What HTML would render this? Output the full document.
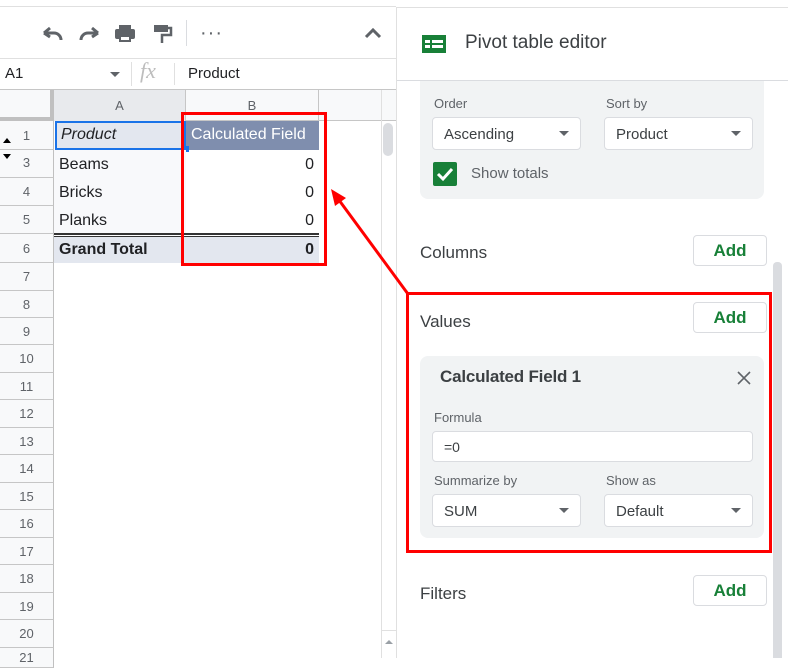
<!DOCTYPE html>
<html><head><style>
*{margin:0;padding:0;box-sizing:border-box}
body{width:788px;height:658px;overflow:hidden;background:#fff;font-family:"Liberation Sans",Arial,sans-serif;position:relative;color:#202124}
.a{position:absolute}
.rh{position:absolute;left:0;width:54px;text-align:center;font-size:13px;color:#5f6368;border-bottom:1px solid #c6c6c6;background:#f8f9fa;border-right:1px solid #c0c0c0}
.lbl{position:absolute;font-size:13px;color:#5f6368}
.dd{position:absolute;background:#fff;border:1px solid #dadce0;border-radius:4px;font-size:15px;color:#3c4043;padding-left:11px;line-height:34px}
.dd.ar:after{content:"";position:absolute;right:11px;top:13px;border:5px solid transparent;border-top:5px solid #5f6368}
.add{position:absolute;left:693px;width:74px;height:31px;border:1px solid #dadce0;border-radius:4px;color:#188038;font-size:17px;font-weight:bold;text-align:center;line-height:29px}
.sec{position:absolute;left:420px;font-size:17px;color:#3c4043}
</style></head><body>
<div class="a" style="left:0;top:6px;width:396px;height:1px;background:#e0e0e0"></div>
<svg class="a" style="left:40px;top:22px" width="150" height="22" viewBox="0 0 150 22">
<path d="M4 11 L10 6 M4 11 L10 15 M4 11 H14 a7 7 0 0 1 7 7" stroke="#5f6368" stroke-width="3" fill="none"/>
<path d="M58 11 L52 6 M58 11 L52 15 M58 11 H48 a7 7 0 0 0 -7 7" stroke="#5f6368" stroke-width="3" fill="none"/>
<rect x="75" y="7" width="20" height="10" rx="2" fill="#5f6368"/><rect x="79" y="3" width="12" height="4" fill="#5f6368"/><rect x="79" y="13" width="12" height="7" fill="#5f6368"/><rect x="81" y="15" width="8" height="3" fill="#fff"/>
<rect x="114" y="3" width="14" height="7" fill="#5f6368"/><path d="M128 6 h3 v7 h-9 v8" stroke="#5f6368" stroke-width="2.5" fill="none"/>
</svg>
<div class="a" style="left:186px;top:20px;width:1px;height:26px;background:#dadce0"></div>
<div class="a" style="left:200px;top:22px;font-size:20px;color:#5f6368;letter-spacing:1px">···</div>
<svg class="a" style="left:364px;top:27px" width="18" height="12"><path d="M2 10 L9 3 L16 10" stroke="#5f6368" stroke-width="3" fill="none"/></svg>
<div class="a" style="left:0;top:58px;width:396px;height:1px;background:#e0e0e0"></div>
<div class="a" style="left:5px;top:65px;font-size:15px">A1</div>
<div class="a" style="left:110px;top:72px;border:5px solid transparent;border-top:5px solid #5f6368"></div>
<div class="a" style="left:131px;top:62px;width:1px;height:24px;background:#e0e0e0"></div>
<div class="a" style="left:140px;top:58px;font-size:22px;font-style:italic;color:#bdbdbd;font-family:'Liberation Serif',serif">fx</div>
<div class="a" style="left:174px;top:63px;width:1px;height:22px;background:#e0e0e0"></div>
<div class="a" style="left:188px;top:65px;font-size:15px">Product</div>
<div class="a" style="left:0;top:89px;width:396px;height:32px;background:#f8f9fa;border-top:1px solid #c6c6c6;border-bottom:1px solid #c6c6c6"></div>
<div class="a" style="left:0;top:90px;width:54px;height:31px;border-right:4px solid #c0c0c0;border-bottom:4px solid #c0c0c0"></div>
<div class="a" style="left:54px;top:90px;width:132px;height:31px;background:#e8eaed;text-align:center;line-height:31px;font-size:13px;color:#5f6368;border-right:1px solid #c6c6c6">A</div>
<div class="a" style="left:186px;top:90px;width:133px;height:31px;text-align:center;line-height:31px;font-size:13px;color:#5f6368;border-right:1px solid #c6c6c6">B</div>
<div class="a" style="left:381px;top:90px;width:1px;height:568px;background:#e0e0e0"></div>
<div class="a" style="left:383px;top:123px;width:10px;height:33px;background:#dadce0;border-radius:5px"></div>
<div class="a" style="left:381px;top:630px;width:15px;height:1px;background:#e0e0e0"></div>
<div class="a" style="left:385px;top:636px;border:4px solid transparent;border-bottom:4px solid #9aa0a6"></div>
<div class="rh" style="top:121px;height:29px;line-height:29px">1</div>
<div class="a" style="left:3px;top:134px;border:4px solid transparent;border-bottom:5px solid #000"></div>
<div class="rh" style="top:150px;height:28px;line-height:26px">3</div>
<div class="a" style="left:3px;top:154px;border:4px solid transparent;border-top:5px solid #000"></div>
<div class="rh" style="top:178px;height:28px;line-height:28px">4</div>
<div class="rh" style="top:206px;height:28px;line-height:28px">5</div>
<div class="rh" style="top:234px;height:29px;line-height:29px">6</div>
<div class="rh" style="top:263px;height:28px;line-height:28px">7</div>
<div class="rh" style="top:291px;height:27px;line-height:27px">8</div>
<div class="rh" style="top:318px;height:27px;line-height:27px">9</div>
<div class="rh" style="top:345px;height:28px;line-height:28px">10</div>
<div class="rh" style="top:373px;height:27px;line-height:27px">11</div>
<div class="rh" style="top:400px;height:28px;line-height:28px">12</div>
<div class="rh" style="top:428px;height:27px;line-height:27px">13</div>
<div class="rh" style="top:455px;height:28px;line-height:28px">14</div>
<div class="rh" style="top:483px;height:27px;line-height:27px">15</div>
<div class="rh" style="top:510px;height:28px;line-height:28px">16</div>
<div class="rh" style="top:538px;height:27px;line-height:27px">17</div>
<div class="rh" style="top:565px;height:28px;line-height:28px">18</div>
<div class="rh" style="top:593px;height:27px;line-height:27px">19</div>
<div class="rh" style="top:620px;height:28px;line-height:28px">20</div>
<div class="rh" style="top:648px;height:20px;line-height:20px">21</div>
<div class="a" style="left:54px;top:121px;width:265px;height:142px;background:#fff"></div>
<div class="a" style="left:55px;top:121px;width:131px;height:29px;background:#e3e7ef;border:2px solid #1a73e8;font-style:italic;font-size:16px;padding-left:4px;line-height:24px">Product</div>
<div class="a" style="left:186px;top:121px;width:133px;height:29px;background:#7f8eae;color:#fff;font-size:16px;line-height:27px;padding-left:5px;white-space:nowrap;overflow:hidden">Calculated Field</div>
<div class="a" style="left:183px;top:146px;width:6px;height:6px;background:#1a73e8"></div>
<div class="a" style="left:54px;top:150px;width:132px;height:84px;background:#f8f9fb"></div>
<div class="a" style="left:59px;top:156px;font-size:16px">Beams</div>
<div class="a" style="left:59px;top:184px;font-size:16px">Bricks</div>
<div class="a" style="left:59px;top:212px;font-size:16px">Planks</div>
<div class="a" style="left:300px;top:156px;font-size:16px;width:14px;text-align:right">0</div>
<div class="a" style="left:300px;top:184px;font-size:16px;width:14px;text-align:right">0</div>
<div class="a" style="left:300px;top:212px;font-size:16px;width:14px;text-align:right">0</div>
<div class="a" style="left:54px;top:233px;width:265px;height:4px;border-top:2px solid #333;border-bottom:1px solid #333"></div>
<div class="a" style="left:54px;top:237px;width:265px;height:26px;background:#e3e7ef"></div>
<div class="a" style="left:59px;top:241px;font-size:16px;font-weight:bold">Grand Total</div>
<div class="a" style="left:300px;top:241px;font-size:16px;font-weight:bold;width:14px;text-align:right">0</div>
<div class="a" style="left:181px;top:112px;width:146px;height:154px;border:3px solid #f00"></div>
<div class="a" style="left:396px;top:7px;width:392px;height:651px;background:#fff;border-left:1px solid #e0e0e0;border-top:1px solid #e0e0e0"></div>
<div class="a" style="left:397px;top:80px;width:391px;height:1px;background:#dadce0"></div>
<svg class="a" style="left:422px;top:35px" width="24" height="18"><rect width="24" height="18" fill="#188038"/><rect x="3" y="5" width="5" height="3" fill="#fff"/><rect x="10" y="5" width="11" height="3" fill="#fff"/><rect x="3" y="10" width="5" height="3" fill="#fff"/><rect x="10" y="10" width="11" height="3" fill="#fff"/></svg>
<div class="a" style="left:465px;top:32px;font-size:19px;color:#3c4043">Pivot table editor</div>
<div class="a" style="left:420px;top:81px;width:344px;height:118px;background:#f1f3f4;border-radius:0 0 8px 8px"></div>
<div class="lbl" style="left:434px;top:96px">Order</div>
<div class="lbl" style="left:606px;top:96px">Sort by</div>
<div class="dd ar" style="left:432px;top:117px;width:149px;height:33px">Ascending</div>
<div class="dd ar" style="left:604px;top:117px;width:149px;height:33px">Product</div>
<div class="a" style="left:433px;top:162px;width:24px;height:24px;background:#188038;border-radius:2px"></div>
<svg class="a" style="left:433px;top:162px" width="24" height="24"><path d="M5 12 L10 17 L19 7" stroke="#fff" stroke-width="3" fill="none"/></svg>
<div class="a" style="left:471px;top:165px;font-size:15px;color:#5f6368">Show totals</div>
<div class="sec" style="top:243px">Columns</div>
<div class="add" style="top:235px">Add</div>
<div class="a" style="left:773px;top:262px;width:9px;height:396px;background:#dadce0;border-radius:4px 4px 0 0"></div>
<div class="sec" style="top:312px">Values</div>
<div class="add" style="top:302px">Add</div>
<div class="a" style="left:420px;top:356px;width:344px;height:182px;background:#f1f3f4;border-radius:8px"></div>
<div class="a" style="left:440px;top:367px;font-size:17px;color:#3c4043;font-weight:bold;letter-spacing:-0.2px">Calculated Field 1</div>
<svg class="a" style="left:737px;top:371px" width="14" height="14"><path d="M1 1 L13 13 M13 1 L1 13" stroke="#5f6368" stroke-width="1.6"/></svg>
<div class="lbl" style="left:434px;top:410px">Formula</div>
<div class="dd" style="left:432px;top:431px;width:321px;height:31px;font-size:14px;line-height:31px">=0</div>
<div class="lbl" style="left:434px;top:473px">Summarize by</div>
<div class="lbl" style="left:606px;top:473px">Show as</div>
<div class="dd ar" style="left:432px;top:494px;width:149px;height:33px">SUM</div>
<div class="dd ar" style="left:604px;top:494px;width:149px;height:33px">Default</div>
<div class="a" style="left:406px;top:292px;width:366px;height:261px;border:3px solid #f00"></div>
<div class="sec" style="top:584px">Filters</div>
<div class="add" style="top:575px">Add</div>
<svg class="a" style="left:320px;top:180px" width="100" height="120"><path d="M88 114 L16 16" stroke="#f00" stroke-width="3"/><path d="M11 9 L26 18 L15 26 Z" fill="#f00"/></svg>
</body></html>
